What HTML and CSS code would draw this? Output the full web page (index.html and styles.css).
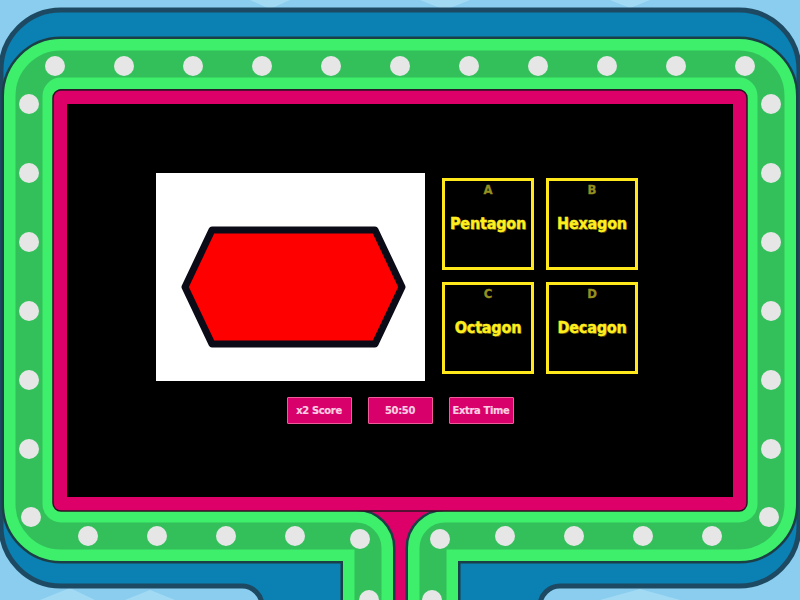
FILE: index.html
```html
<!DOCTYPE html>
<html lang="en">
<head>
<meta charset="utf-8">
<title>Shape Quiz</title>
<link rel="stylesheet" href="styles.css">
</head>
<body>
<div class="stage">
  <svg class="frame" width="800" height="600" viewBox="0 0 800 600" aria-hidden="true">
    <rect x="0" y="0" width="800" height="600" fill="#8acdee"/>
    <polygon points="250,0 290,0 270,9" fill="#a3daf3"/>
    <polygon points="420,0 470,0 445,10" fill="#a3daf3"/>
    <polygon points="610,0 650,0 630,8" fill="#a3daf3"/>
    <polygon points="40,600 70,588 95,600" fill="#a3daf3"/>
    <polygon points="125,600 150,590 175,600" fill="#a3daf3"/>
    <polygon points="600,600 640,589 680,600" fill="#a3daf3"/>
    <path d="M61 10 L739 10 A60 60 0 0 1 799 70 L799 526 A60 60 0 0 1 739 586 L560 586 A20 20 0 0 0 540 606 L540 640 L262 640 L262 606 A20 20 0 0 0 242 586 L61 586 A60 60 0 0 1 1 526 L1 70 A60 60 0 0 1 61 10 Z" fill="#0b80b2" stroke="#1d4a62" stroke-width="5"/>
    <rect x="355" y="495" width="90" height="120" fill="#dc0068"/>
    <g fill="none" stroke-linejoin="round">
      <path d="M368 640 L368 548 A12 12 0 0 0 356 536 L61 536 A32 32 0 0 1 29 504 L29 96 A32 32 0 0 1 61 64 L739 64 A32 32 0 0 1 771 96 L771 504 A32 32 0 0 1 739 536 L445 536 A12 12 0 0 0 433 548 L433 640" stroke="#1b3f47" stroke-width="55"/>
      <path d="M368 640 L368 548 A12 12 0 0 0 356 536 L61 536 A32 32 0 0 1 29 504 L29 96 A32 32 0 0 1 61 64 L739 64 A32 32 0 0 1 771 96 L771 504 A32 32 0 0 1 739 536 L445 536 A12 12 0 0 0 433 548 L433 640" stroke="#3def6b" stroke-width="50"/>
      <path d="M368 640 L368 548 A12 12 0 0 0 356 536 L61 536 A32 32 0 0 1 29 504 L29 96 A32 32 0 0 1 61 64 L739 64 A32 32 0 0 1 771 96 L771 504 A32 32 0 0 1 739 536 L445 536 A12 12 0 0 0 433 548 L433 640" stroke="#33c05a" stroke-width="27"/>
    </g>
    <rect x="53" y="90" width="694" height="421" rx="8" fill="#dc0068" stroke="#2a1422" stroke-width="1.5"/>
    <g fill="#e6e6e6">
      <circle cx="55" cy="66" r="10"/><circle cx="124" cy="66" r="10"/><circle cx="193" cy="66" r="10"/>
      <circle cx="262" cy="66" r="10"/><circle cx="331" cy="66" r="10"/><circle cx="400" cy="66" r="10"/>
      <circle cx="469" cy="66" r="10"/><circle cx="538" cy="66" r="10"/><circle cx="607" cy="66" r="10"/>
      <circle cx="676" cy="66" r="10"/><circle cx="745" cy="66" r="10"/>
      <circle cx="29" cy="104" r="10"/><circle cx="29" cy="173" r="10"/><circle cx="29" cy="242" r="10"/>
      <circle cx="29" cy="311" r="10"/><circle cx="29" cy="380" r="10"/><circle cx="29" cy="449" r="10"/>
      <circle cx="31" cy="517" r="10"/>
      <circle cx="771" cy="104" r="10"/><circle cx="771" cy="173" r="10"/><circle cx="771" cy="242" r="10"/>
      <circle cx="771" cy="311" r="10"/><circle cx="771" cy="380" r="10"/><circle cx="771" cy="449" r="10"/>
      <circle cx="769" cy="517" r="10"/>
      <circle cx="88" cy="536" r="10"/><circle cx="157" cy="536" r="10"/><circle cx="226" cy="536" r="10"/>
      <circle cx="295" cy="536" r="10"/><circle cx="360" cy="539" r="10"/>
      <circle cx="440" cy="539" r="10"/><circle cx="505" cy="536" r="10"/><circle cx="574" cy="536" r="10"/>
      <circle cx="643" cy="536" r="10"/><circle cx="712" cy="536" r="10"/>
      <circle cx="369" cy="600" r="10"/><circle cx="432" cy="600" r="10"/>
    </g>
  </svg>

  <main class="screen">
    <section class="question">
      <div class="picture">
        <svg width="269" height="208" viewBox="0 0 269 208" aria-hidden="true">
          <path d="M56 57 L219 57 L246 114 L219 171 L56 171 L29 114 Z" fill="#ff0000" stroke="#0b0b17" stroke-width="7" stroke-linejoin="round"/>
        </svg>
      </div>
      <div class="answers">
        <div class="card"><span class="letter">A</span><span class="answer">Pentagon</span></div>
        <div class="card"><span class="letter">B</span><span class="answer">Hexagon</span></div>
        <div class="card"><span class="letter">C</span><span class="answer">Octagon</span></div>
        <div class="card"><span class="letter">D</span><span class="answer">Decagon</span></div>
      </div>
    </section>
    <nav class="powerups">
      <button class="power">x2 Score</button>
      <button class="power">50:50</button>
      <button class="power">Extra Time</button>
    </nav>
  </main>
</div>
</body>
</html>
```

FILE: styles.css
```css
* {
  box-sizing: border-box;
}

html, body {
  margin: 0;
  padding: 0;
  background: #8acdee;
}

body {
  font-family: "DejaVu Sans Condensed", "DejaVu Sans", sans-serif;
}

.stage {
  position: relative;
  width: 800px;
  height: 600px;
  overflow: hidden;
  padding: 104px 67px 0 67px;
}

.frame {
  position: absolute;
  left: 0;
  top: 0;
  display: block;
}

.screen {
  position: relative;
  width: 666px;
  height: 393px;
  background: #000;
  display: flex;
  flex-direction: column;
  padding-top: 69px;
}

.question {
  display: flex;
  align-items: flex-start;
  padding-left: 89px;
}

.picture {
  width: 269px;
  height: 208px;
  background: #ffffff;
}

.picture svg {
  display: block;
}

.answers {
  display: grid;
  grid-template-columns: 92px 92px;
  grid-auto-rows: 92px;
  gap: 12px;
  margin-left: 17px;
  margin-top: 5px;
}

.card {
  border: 3px solid #ffe81c;
  background: #000;
  display: flex;
  flex-direction: column;
  align-items: center;
  padding-top: 1px;
}

.letter {
  font-size: 13px;
  line-height: 15px;
  font-weight: bold;
  color: #958f1f;
  -webkit-text-stroke: 0.3px #958f1f;
}

.answer {
  margin-top: 17px;
  font-size: 16px;
  line-height: 20px;
  font-weight: bold;
  color: #ffee1f;
  letter-spacing: -0.2px;
  -webkit-text-stroke: 0.4px #ffee1f;
  text-shadow: 1px 1px 0 #4a4200;
}

.powerups {
  display: flex;
  justify-content: center;
  gap: 16px;
  margin-top: 16px;
}

.power {
  width: 65px;
  height: 27px;
  padding: 0;
  background: #d8006a;
  border: 1.5px solid #f05c9a;
  border-radius: 1px;
  color: #fbd0e2;
  font-family: "DejaVu Sans Condensed", "DejaVu Sans", sans-serif;
  font-size: 11px;
  font-weight: bold;
  letter-spacing: -0.3px;
  -webkit-text-stroke: 0.2px #fbd0e2;
}
```
